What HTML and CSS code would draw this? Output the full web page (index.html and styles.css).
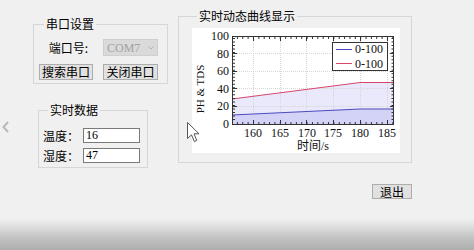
FILE: index.html
```html
<!DOCTYPE html>
<html lang="zh-CN">

<head>
    <meta charset="UTF-8">
    <title>实时数据监测</title>
    <link rel="stylesheet" href="styles.css">
</head>

<body>

    <div class="app">
        <div class="side">
            <fieldset class="group serial">
                <legend>串口设置</legend>
                <div class="serial-grid">
                    <span class="field-label">端口号:</span>
                    <div class="combo">
                        <span>COM7</span>
                        <svg width="6" height="4" viewBox="0 0 6 4"><polyline points="0.5,0.5 3,3 5.5,0.5" fill="none" stroke="#b4b4b4" stroke-width="1"/></svg>
                    </div>
                    <button class="btn">搜索串口</button>
                    <button class="btn">关闭串口</button>
                </div>
            </fieldset>

            <fieldset class="group data">
                <legend>实时数据</legend>
                <div class="data-row">
                    <span class="data-label">温度：</span>
                    <input class="data-input" type="text" value="16">
                </div>
                <div class="data-row">
                    <span class="data-label">湿度：</span>
                    <input class="data-input" type="text" value="47">
                </div>
            </fieldset>
        </div>

        <div class="main">
            <fieldset class="group plot-group">
                <legend>实时动态曲线显示</legend>
                <svg class="chart" width="208" height="125" viewBox="0 0 208 125">
                    <rect x="0" y="0" width="208" height="125" fill="#fff"/>

                    <!-- filled areas under the curves -->
                    <polygon points="40,96 40,71 168.2,54.5 202,54.5 202,96" fill="#e9e9fb"/>
                    <polygon points="40,96 40,87 168.2,81 202,81 202,96" fill="#d3d3f7"/>

                    <!-- grid -->
                    <g stroke="#d6d6d6" stroke-width="1" stroke-dasharray="1 1">
                        <line x1="61.5" y1="9" x2="61.5" y2="96"/>
                        <line x1="88.5" y1="9" x2="88.5" y2="96"/>
                        <line x1="114.5" y1="9" x2="114.5" y2="96"/>
                        <line x1="141.5" y1="9" x2="141.5" y2="96"/>
                        <line x1="168.5" y1="9" x2="168.5" y2="96"/>
                        <line x1="195.5" y1="9" x2="195.5" y2="96"/>
                        <line x1="41" y1="25.5" x2="202" y2="25.5"/>
                        <line x1="41" y1="43.5" x2="202" y2="43.5"/>
                        <line x1="41" y1="60.5" x2="202" y2="60.5"/>
                        <line x1="41" y1="78.5" x2="202" y2="78.5"/>
                    </g>

                    <!-- curves -->
                    <polyline points="40,71 168.2,54.5 202,54.5" fill="none" stroke="#d8456c" stroke-width="1"/>
                    <polyline points="40,87 168.2,81 202,81" fill="none" stroke="#4b4bbf" stroke-width="1"/>

                    <!-- minor ticks -->
                    <g stroke="#333" stroke-width="2">
                        <line x1="44.9" y1="95" x2="202" y2="95" stroke-dasharray="1 4.36"/>
                        <line x1="44.9" y1="10" x2="202" y2="10" stroke-dasharray="1 4.36"/>
                    </g>
                    <g stroke="#333" stroke-width="2">
                        <line x1="42" y1="92" x2="42" y2="8" stroke-dasharray="1 2.52"/>
                        <line x1="200.5" y1="92" x2="200.5" y2="8" stroke-dasharray="1 2.52"/>
                    </g>

                    <!-- major ticks -->
                    <g stroke="#333" stroke-width="1">
                        <path d="M61.5,96 v-4 M88.5,96 v-4 M114.5,96 v-4 M141.5,96 v-4 M168.5,96 v-4 M195.5,96 v-4"/>
                        <path d="M61.5,9 v4 M88.5,9 v4 M114.5,9 v4 M141.5,9 v4 M168.5,9 v4 M195.5,9 v4"/>
                        <path d="M41,25.5 h4 M41,43.5 h4 M41,60.5 h4 M41,78.5 h4"/>
                        <path d="M202,25.5 h-4 M202,43.5 h-4 M202,60.5 h-4 M202,78.5 h-4"/>
                    </g>

                    <!-- frame -->
                    <rect x="40.5" y="8.5" width="161" height="88" fill="none" stroke="#333" stroke-width="1"/>

                    <!-- axis labels -->
                    <g class="tick-text" text-anchor="end">
                        <text x="37" y="12">100</text>
                        <text x="37" y="29.6">80</text>
                        <text x="37" y="47.2">60</text>
                        <text x="37" y="64.8">40</text>
                        <text x="37" y="82.4">20</text>
                        <text x="37" y="100">0</text>
                    </g>
                    <g class="tick-text" text-anchor="middle">
                        <text x="61" y="109">160</text>
                        <text x="88" y="109">165</text>
                        <text x="115" y="109">170</text>
                        <text x="141" y="109">175</text>
                        <text x="168" y="109">180</text>
                        <text x="195" y="109">185</text>
                    </g>
                    <text class="axis-title" x="0" y="0" text-anchor="middle" transform="translate(12 61) rotate(-90)">PH &amp; TDS</text>
                    <text class="axis-title-x" x="121" y="122" text-anchor="middle">时间/s</text>

                    <!-- legend -->
                    <rect x="140.5" y="14.5" width="55" height="28" fill="#fff" stroke="#333" stroke-width="1"/>
                    <line x1="144" y1="21.5" x2="160" y2="21.5" stroke="#4b4bbf" stroke-width="1"/>
                    <line x1="144" y1="35.5" x2="160" y2="35.5" stroke="#d8456c" stroke-width="1"/>
                    <text class="tick-text" x="163" y="25">0-100</text>
                    <text class="tick-text" x="163" y="39.5">0-100</text>
                </svg>
            </fieldset>
            <button class="btn exit-btn">退出</button>
        </div>
    </div>

    <!-- viewer overlays -->
    <svg class="nav-arrow" width="8" height="12" viewBox="0 0 8 12"><polyline points="6,1 1.5,6 6,11" fill="none" stroke="#b8b8b8" stroke-width="2"/></svg>
    <svg class="cursor" width="13" height="21" viewBox="0 0 13 21"><path d="M0.5,0.5 L0.5,16.5 L4.5,12.8 L7.3,19.5 L9.8,18.5 L7,11.8 L12,11.8 Z" fill="#fff" stroke="#555" stroke-width="1"/></svg>
    <div class="bottom-shade"></div>

</body>

</html>
```

FILE: styles.css
```css
html, body {
    margin: 0;
    padding: 0;
}

body {
    width: 474px;
    height: 250px;
    overflow: hidden;
    position: relative;
    background-color: #f0f0f0;
    font-family: "Liberation Serif", "Noto Sans CJK SC", serif;
    font-size: 12px;
    line-height: 1;
    color: #000;
}

.app {
    display: flex;
    align-items: flex-start;
    padding: 10px 0 0 33px;
}

.side {
    width: 135px;
    margin-top: 8px;
    display: flex;
    flex-direction: column;
}

.group {
    margin: 0;
    padding: 0;
    min-width: 0;
    border: 1px solid #d6d6d6;
}

    .group legend {
        margin-left: 5px;
        padding: 0 2px;
        font-family: "Noto Sans CJK SC", sans-serif;
        font-size: 12px;
        line-height: 12px;
    }

/* serial settings */
.serial {
    width: 135px;
    box-sizing: border-box;
    padding: 9px 0 3px 5px;
}

.serial-grid {
    display: grid;
    grid-template-columns: 54px 55px;
    column-gap: 10px;
    row-gap: 8px;
    align-items: center;
}

.field-label {
    text-align: right;
    padding-right: 5px;
    line-height: 17px;
    font-family: "Noto Sans CJK SC", sans-serif;
}

.combo {
    height: 17px;
    box-sizing: border-box;
    border: 1px solid #cfcfcf;
    background-color: #dadada;
    color: #a2a2a2;
    padding: 0 3px 0 3px;
    display: flex;
    align-items: center;
    justify-content: space-between;
}

.btn {
    height: 16px;
    padding: 0;
    margin: 0;
    border: 1px solid #adadad;
    background-color: #e1e1e1;
    font-family: "Noto Sans CJK SC", sans-serif;
    font-size: 12px;
    line-height: 14px;
    color: #000;
}

/* realtime data */
.data {
    width: 110px;
    box-sizing: border-box;
    margin: 20px 0 0 5px;
    padding: 12px 0 4px 4px;
}

.data-row {
    display: flex;
    align-items: center;
}

    .data-row + .data-row {
        margin-top: 5px;
    }

.data-label {
    width: 40px;
    font-family: "Noto Sans CJK SC", sans-serif;
    line-height: 15px;
}

.data-input {
    width: 57px;
    height: 15px;
    box-sizing: border-box;
    margin: 0;
    padding: 0 2px;
    border: 1px solid #7a7a7a;
    background-color: #fff;
    font-family: "Liberation Serif", serif;
    font-size: 12px;
    color: #000;
    outline: none;
}

/* chart */
.main {
    display: flex;
    flex-direction: column;
    align-items: flex-end;
    margin-left: 10px;
}

.plot-group {
    width: 234px;
    box-sizing: border-box;
    padding: 6px 11px 9px 13px;
}

.chart {
    display: block;
}

.tick-text {
    font-family: "Liberation Serif", serif;
    font-size: 12px;
    fill: #111;
}

.axis-title {
    font-family: "Liberation Serif", serif;
    font-size: 11px;
    fill: #111;
}

.axis-title-x {
    font-family: "Liberation Serif", "Noto Sans CJK SC", serif;
    font-size: 12px;
    fill: #111;
}

.exit-btn {
    width: 40px;
    height: 15px;
    margin-top: 21px;
    line-height: 13px;
}

/* image viewer overlays */
.nav-arrow {
    position: absolute;
    left: 2px;
    top: 121px;
}

.cursor {
    position: absolute;
    left: 187px;
    top: 122px;
}

.bottom-shade {
    position: absolute;
    left: 0;
    bottom: 0;
    width: 100%;
    height: 32px;
    background: linear-gradient(to bottom, #f0f0f0 0%, #e0e0e0 25%, #c4c4c4 60%, #adadad 100%);
}
```
